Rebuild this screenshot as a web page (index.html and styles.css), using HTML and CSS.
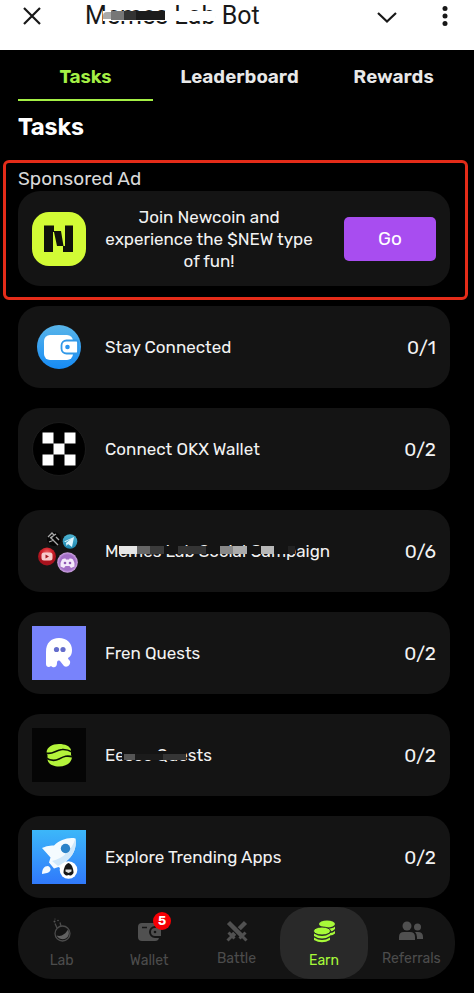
FILE: index.html
```html
<!DOCTYPE html>
<html lang="en">
<head>
<meta charset="utf-8">
<meta name="viewport" content="width=device-width, initial-scale=1">
<title>Memes Lab Bot</title>
<link rel="stylesheet" href="styles.css">
</head>
<body>
<header class="topbar">
  <button class="icon-btn" aria-label="Close"><svg width="20" height="20" viewBox="0 0 20 20"><path d="M2 2l16 16M18 2L2 18" fill="none" stroke="#181818" stroke-width="2.200"/></svg></button>
  <h1 class="title">Memes Lab Bot
    <svg class="mask mask-title" width="112" height="10" viewBox="0 0 112 10"><path fill="#fff" d="M0 0h112v10H0z"/><path fill="#aaa" d="M4 1h4v7H0V5a4 4 0 0 1 4-4z"/><path fill="#777" d="M8 0h13v9H8z"/><path fill="#333" d="M21 0h12v9H21z"/><path fill="#1c1c1c" d="M33 0h29v9H33z"/></svg>
  </h1>
  <button class="icon-btn" aria-label="Collapse"><svg width="20" height="20" viewBox="0 0 20 20"><path d="M1 7l9 8.500L19 7" fill="none" stroke="#181818" stroke-width="2.200"/></svg></button>
  <button class="icon-btn menu" aria-label="More"><svg width="6" height="20" viewBox="0 0 6 20" fill="#181818"><circle cx="3" cy="2.500" r="2.500"/><circle cx="3" cy="10" r="2.500"/><circle cx="3" cy="17.500" r="2.500"/></svg></button>
</header>
<main>
  <nav class="tabs" aria-label="Sections">
    <a class="tab active" href="#tasks">Tasks</a>
    <a class="tab wide" href="#leaderboard">Leaderboard</a>
    <a class="tab" href="#rewards">Rewards</a>
  </nav>
  <h2 class="heading" id="tasks">Tasks</h2>
  <section class="sponsored">
    <h3 class="label">Sponsored Ad</h3>
    <div class="card ad">
      <svg class="logo" viewBox="0 0 54 54"><rect width="54" height="54" rx="17" fill="#d2fb35"/><path fill="#10120b" d="M12 13.500h10V19h7l2.500 15H33V13.500h8V40H31v-6h-6l-3-14h-1v20h-9z"/></svg>
      <p class="ad-text">Join Newcoin and experience the $NEW type of fun!</p>
      <button class="go">Go</button>
    </div>
  </section>
  <ul class="list">
    <li class="card">
      <svg class="logo" viewBox="0 0 54 54"><defs><linearGradient id="w" x1="0" y1="0" x2="0" y2="1"><stop stop-color="#59b5e9"/><stop offset="1" stop-color="#168bf5"/></linearGradient></defs><circle cx="27" cy="27" r="22" fill="url(#w)"/><rect x="12" y="15" width="29" height="25" rx="6" fill="#fff"/><path d="M44.500 20.500h-10a5 5 0 0 0-5 5v3a5 5 0 0 0 5 5h10q1.500 0 1.500-2v-9q0-2-1.500-2z" fill="#fff" stroke="#3299e8" stroke-width="1.800"/><circle cx="35.500" cy="27" r="2.300" fill="#2a94ee"/></svg>
      <span class="name">Stay Connected</span><span class="count">0/1</span>
    </li>
    <li class="card">
      <svg class="logo" viewBox="0 0 54 54"><circle cx="27" cy="27" r="26.500" fill="#000" stroke="#222" stroke-width=".7"/><path fill="#fff" d="M10.500 10.500h11v11h-11zM32.500 10.500h11v11h-11zM21.500 21.500h11v11h-11zM10.500 32.500h11v11h-11zM32.500 32.500h11v11h-11z"/></svg>
      <span class="name">Connect OKX Wallet</span><span class="count">0/2</span>
    </li>
    <li class="card">
      <svg class="logo" viewBox="0 0 54 54"><defs><radialGradient id="r" cx=".5" cy=".3"><stop stop-color="#f06a6a"/><stop offset=".6" stop-color="#cf2029"/><stop offset="1" stop-color="#a6121d"/></radialGradient><linearGradient id="t" x1="0" y1="0" x2="0" y2="1"><stop stop-color="#4eb5d3"/><stop offset="1" stop-color="#1c84ae"/></linearGradient><radialGradient id="d"><stop stop-color="#a66fc8"/><stop offset=".75" stop-color="#a26fc5"/><stop offset="1" stop-color="#d1a8e3"/></radialGradient></defs>
        <circle cx="22" cy="15" r="7" fill="#060606"/><path d="M16 13l4-4 2 2-3 3 7 7M18 14l6-4M17 18l5-2M24 13l3 3" fill="none" stroke="#aaa" stroke-width="1.300"/>
        <circle cx="38" cy="17.500" r="7.300" fill="url(#t)"/><path d="M32 17.500l10-4.500-2 10-4-3-1.500 2-.5-3 5-4-5.500 3z" fill="#def6ff"/>
        <circle cx="15" cy="32.500" r="9" fill="url(#r)"/><rect x="9.500" y="28.500" width="11" height="8" rx="2.500" fill="#f7cccc"/><path d="M13.500 30.500v4l3.500-2z" fill="#a51b22"/>
        <circle cx="35.500" cy="38.500" r="10.300" fill="url(#d)"/><path d="M30 35.500q2-1.500 3.500-1l.5 1h3l.5-1q2-.5 3.500 1 2 3 1.500 7l-3.500 1.500-1.500-2h-4l-1.500 2-3.500-1.500q-.5-4 1.500-7z" fill="#f4e9fb"/><circle cx="33" cy="39" r="1.300" fill="#9159b6"/><circle cx="38" cy="39" r="1.300" fill="#9159b6"/></svg>
      <span class="name">Memes Lab Social Campaign
        <svg class="mask mask-social" width="176" height="8" viewBox="0 0 176 8"><path fill="#141414" d="M0 0h176v8H0z"/><path fill="#e6e6e6" d="M0 0h18v8H0z"/><path fill="#666" d="M18 0h13v8H18z"/><path fill="#3b3b3b" d="M31 0h14v8H31z"/><path fill="#343434" d="M59 0h28v8H59z"/><path fill="#888" d="M101 0h13v8h-13z"/><path fill="#ababab" d="M114 0h14v8h-14z"/><path fill="#b7b7b7" d="M142 0h13v8h-13z"/><path fill="#222" d="M169 0h7v8h-7z"/></svg></span><span class="count">0/6</span>
    </li>
    <li class="card">
      <svg class="logo" viewBox="0 0 54 54"><path fill="#7883fb" d="M0 0h54v54H0z"/><path fill="#fff" d="M14 26c0-9 5-14 13-14s13 5 13 12c0 5-2 7-4 8 0 1 1 2 2 3 1 4-3 7-6 5l-4-5c-2-1-3 0-3 2 0 5-4 5-6 3-2 2-5 1-5-2z"/><circle cx="24.500" cy="23.500" r="2.600" fill="#646dcc"/><circle cx="31" cy="23.500" r="2.600" fill="#646dcc"/></svg>
      <span class="name">Fren Quests</span><span class="count">0/2</span>
    </li>
    <li class="card">
      <svg class="logo" viewBox="0 0 54 54"><path fill="#050505" d="M0 0h54v54H0z"/><path fill="#b4f43b" d="M14.500 24.500C15 19 20 16 27 16c6 0 11 2 12 6v5l1 2c-.5 6-6 9.500-13 9.500-6 0-11-2.500-11.500-7V27z"/><path fill="none" stroke="#0b1205" stroke-width="1.600" d="M14 25c7 2 9-3 16-3.500q5-.5 10 2.500M14 30c5 3 9 3 13 1 5-2.500 8-4 14-2"/></svg>
      <span class="name">Eesee Quests
        <svg class="mask mask-eesee" width="64" height="9" viewBox="0 0 64 9"><path fill="#141414" d="M0 0h64v9H0z"/><path fill="#555" d="M2 3h11v6H2z"/><path fill="#1b1b1b" d="M13 3h28v6H13z"/><path fill="#353535" d="M41 3h23v6H41z"/></svg></span><span class="count">0/2</span>
    </li>
    <li class="card">
      <svg class="logo" viewBox="0 0 54 54"><defs><linearGradient id="b" x1="0" y1="0" x2="0" y2="1"><stop stop-color="#3cb7f9"/><stop offset="1" stop-color="#3079fb"/></linearGradient></defs><path fill="url(#b)" d="M0 0h54v54H0z"/><path d="M10 18q5-3 12-2.500C28 10 36 7 43.500 8.500 45 18 41 26 34.500 31l-2 10-6-4-4.500 1.500-5-6 1.500-5z" fill="#f4fbff"/><path d="M43.500 8.500C45 18 41 26 34 31.500l-8 4.500-6-5q17-4 23.500-22.500z" fill="#cfe8fb"/><circle cx="33.500" cy="18.500" r="4.700" fill="#2b83c9"/><path d="M10 44c0-5 2-8 6-8 4 2 3 6-1 7z" fill="#f5fbff"/><circle cx="36.500" cy="40" r="8.800" fill="#fff"/><path d="M36.500 33c3 1 5 5 5 10-2 4-8 4-10 0 0-5 2-9 5-10z" fill="#171717"/><path d="M33.500 39.500h6v2l-3 1.500-3-1.500z" fill="#ddd"/><path d="M34 45h5l-2.500 1z" fill="#fff"/></svg>
      <span class="name">Explore Trending Apps</span><span class="count">0/2</span>
    </li>
  </ul>
</main>
<nav class="dock" aria-label="Main">
  <a class="item" href="#lab"><span class="glyph"><svg width="24" height="26" viewBox="0 0 24 26"><circle cx="12.500" cy="15.500" r="7.500" fill="none" stroke="#4b4b4b" stroke-width="1.300"/><path d="M7 10L5 5.500M11 8l-1-3.500" stroke="#4b4b4b" stroke-width="1.300"/><path d="M6.500 17.500c5 1.500 9-1.500 11.500-6 4 8-6 14-11.500 6z" fill="#626262"/><circle cx="4.500" cy="3.500" r="1" fill="#555"/><circle cx="8" cy="2.500" r=".8" fill="#555"/><circle cx="5" cy="1" r=".6" fill="#555"/></svg></span>Lab</a>
  <a class="item" href="#wallet"><span class="glyph"><svg width="24" height="26" viewBox="0 0 24 26"><rect x="1" y="5" width="21" height="18" rx="4" fill="#505050"/><path d="M5 9.500h5" stroke="#171717" stroke-width="1.500"/><path d="M24 9h-6a5 5 0 0 0 0 10h6" fill="#505050" stroke="#151515" stroke-width="2"/><circle cx="18" cy="14" r="1.300" fill="#151515"/></svg><span class="badge">5</span></span>Wallet</a>
  <a class="item raised" href="#battle"><span class="glyph"><svg width="24" height="26" viewBox="0 0 24 26" fill="none" stroke="#515151"><path d="M20.500 4.500L7 18" stroke-width="4.500"/><path d="M3.500 14.500l6 6M7 18l-4.500 4.500" stroke-width="3"/><path d="M3.500 4.500L17 18" stroke="#151515" stroke-width="6.500"/><path d="M3.500 4.500L17 18" stroke-width="4.500"/><path d="M20.500 14.500l-6 6M17 18l4.500 4.500" stroke-width="3"/></svg></span>Battle</a>
  <a class="item current" href="#earn"><span class="glyph"><svg width="24" height="26" viewBox="0 0 24 26" fill="#a7fa39"><ellipse cx="15" cy="6" rx="8" ry="3.500"/><path d="M16 10.500q5 0 7-2v2.500q-2 2.500-6 2.500zM18 15q3 0 5-2v2.500q-2 2-5 2z"/><ellipse cx="10" cy="13" rx="8.500" ry="4" stroke="#292929"/><path d="M2 15.500q8 5 16 0V18q-8 5-16 0zM2 19.500q8 5 16 0V22q-8 4.500-16 0z"/></svg></span>Earn</a>
  <a class="item raised" href="#referrals"><span class="glyph"><svg width="26" height="26" viewBox="0 0 26 26" fill="#505050"><circle cx="9" cy="8" r="4.500"/><path d="M1 22v-3q0-5 5-5h6q5 0 5 5v3zM17 14h3q5 0 5 5v2h-6v-2q0-3-2-5z"/><circle cx="19.500" cy="9" r="3.500"/></svg></span>Referrals</a>
</nav>
</body>
</html>
```
FILE: styles.css
```css
* { box-sizing: border-box; }
body { margin: 0; background: #000; color: #f2f2f2; font-family: Rubik, Roboto, sans-serif; }
h1, h2, h3, p, ul { margin: 0; padding: 0; font-weight: 400; }
button { border: 0; padding: 0; font: inherit; }
a { color: inherit; text-decoration: none; }
svg { display: block; }

.topbar { display: flex; align-items: center; height: 50px; padding: 0 26px 18px 22px; background: #fff; }
.icon-btn { display: grid; place-items: center; background: none; }
.title { position: relative; flex: 1; margin-left: 43px; color: #181818; font-family: Roboto, sans-serif; font-size: 25px; line-height: 32px; white-space: nowrap; }
.menu { margin-left: 45px; }
.mask { position: absolute; }
.mask-title { left: 18px; top: 11px; }
.mask-social { left: 14px; top: 7px; }
.mask-eesee { left: 17px; top: 8px; }

.tabs { display: flex; margin: 0 13px 0 18px; color: #e8e8e8; font-size: 19px; font-weight: 600; line-height: 24px; text-align: center; }
.tab { flex: 135; padding: 15px 0 10px; border-bottom: 2px solid transparent; }
.wide { flex: 173; }
.active { color: #a4f045; border-color: #a4f045; }
.heading { margin: 10px 18px 0; color: #fff; font-size: 24px; font-weight: 600; line-height: 32px; }

.sponsored { margin: 17px 6px 0 3px; padding: 4px 15px 11px 12px; border: 3px solid #e42c19; border-radius: 6px; }
.label { color: #d8d8d8; font-size: 19px; line-height: 24px; }
.card { display: flex; align-items: center; min-height: 82px; padding: 12px 14px; border-radius: 22px; background: #141414; }
.ad { min-height: 95px; }
.logo { flex: none; width: 54px; height: 54px; margin-right: 19px; }
.ad-text { flex: 1; font-size: 17px; line-height: 22px; text-align: center; }
.ad .logo { margin-right: 16px; }
.go { width: 92px; height: 44px; margin-left: 28px; border-radius: 5px; background: #a84df0; color: #fff; font-size: 19px; }

.list { display: grid; gap: 20px; margin: 6px 24px 0 18px; list-style: none; }
.name { position: relative; flex: 1; font-size: 17px; line-height: 24px; white-space: nowrap; }
.count { font-size: 19px; }

.dock { display: flex; margin: 9px 19px 12px 18px; border-radius: 34px; background: #141414; color: #4c4c4c; font-size: 14px; line-height: 20px; }
.item { display: flex; flex: 1; flex-direction: column; align-items: center; gap: 7px; padding: 11px 0 8px; border-radius: 30px; }
.raised { gap: 5px; }
.glyph { position: relative; }
.badge { position: absolute; left: 16px; top: -6px; width: 18px; height: 18px; border-radius: 50%; background: #f50004; color: #fff; font-size: 13px; font-weight: 600; line-height: 18px; text-align: center; }
.current { background: #292929; color: #a7fa39; }
```
